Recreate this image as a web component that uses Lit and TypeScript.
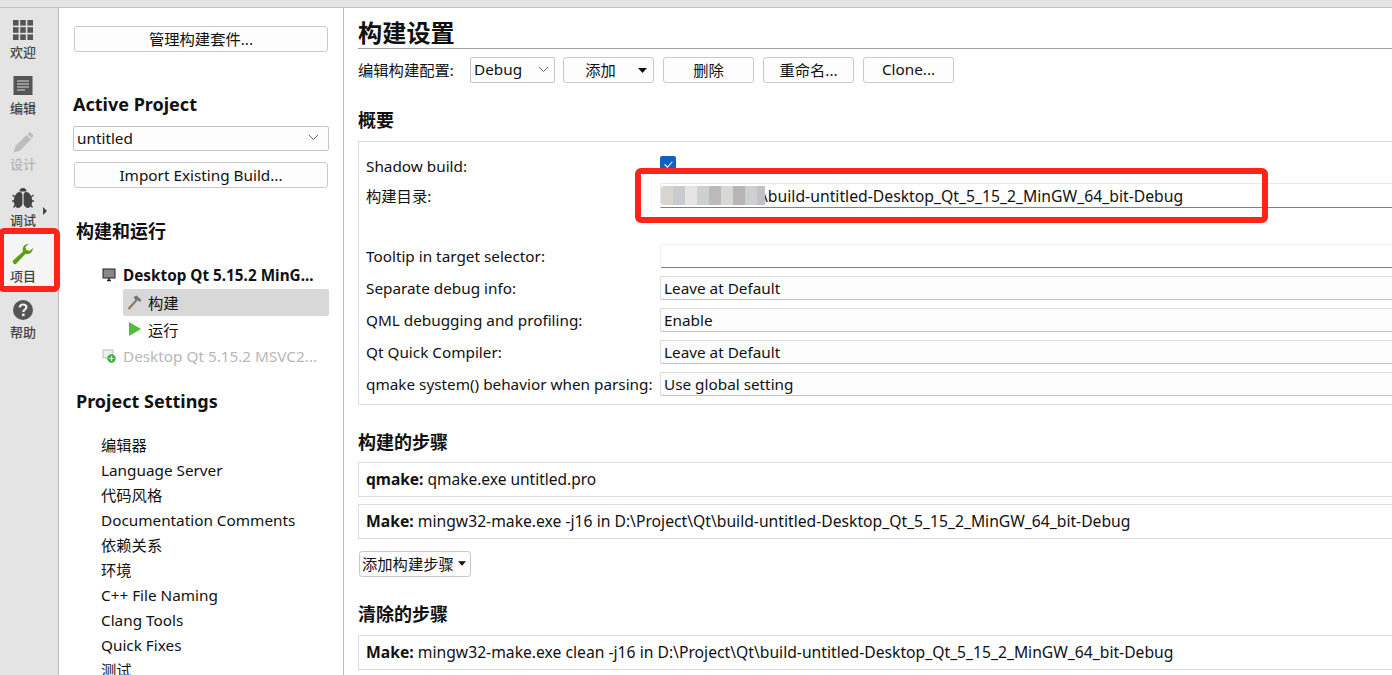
import { LitElement, html, css, svg } from "lit";
import { customElement } from "lit/decorators.js";

const caret = html`<svg class="chev" width="11" height="7" viewBox="0 0 11 7"><path d="M1 1l4.5 4.5L10 1" fill="none" stroke="#666" stroke-width="1"/></svg>`;
const tri = html`<svg class="tri" width="9" height="5" viewBox="0 0 9 5"><path d="M0 0h9L4.5 5z" fill="#111"/></svg>`;

const icons = {
  grid: svg`<g fill="#555">${[0, 1, 2].flatMap((r) => [0, 1, 2].map((c) => svg`<rect x="${1 + c * 7.2}" y="${1 + r * 7.2}" width="5.6" height="5.6"/>`))}</g>`,
  edit: svg`<rect x="1.500" y="1" width="19" height="19" fill="#555"/><path d="M5 6h12M5 9h12M5 12h12M5 15h8" stroke="#ddd" stroke-width="1"/>`,
  pencil: svg`<path d="M1.500 21.500l2-6.500L14.500 4l4.500 4.500L8 19.500z" fill="#bdbdbd"/><path d="M15.500 3L17 1.500c.6-.5 1-.5 1.500 0L21 4c.5.5.5 1 0 1.500L19.800 7.500z" fill="#bdbdbd"/>`,
  bug: svg`<ellipse cx="6.800" cy="13" rx="5" ry="8" transform="rotate(8 6.800 13)" fill="#444"/><ellipse cx="15.200" cy="13" rx="5" ry="8" transform="rotate(-8 15.200 13)" fill="#444"/><path d="M7.500 4.500a3.500 3.500 0 0 1 7 0z" fill="#444"/><path d="M11 5v16" stroke="#e4e4e4" stroke-width="1.200"/><path d="M3 10L.5 8M2.500 14H0M3.500 18l-2 2.500M19 10l2.500-2M19.500 14H22M18.500 18l2 2.500" stroke="#444" stroke-width="1.400"/>`,
  wrench: svg`<path d="M1.800 18.500L11.500 9.500C10.600 6.500 12 2.800 16.800 2.200L13.800 5.400 14.800 8.300 17.800 9.200 21 6.200C20.800 10.800 17 12.700 14 11.700L4.800 21.600C3.600 22.600 1 20 1.800 18.500z" fill="#5aa015"/>`,
  help: svg`<circle cx="11" cy="11" r="10" fill="#555"/><path d="M7.700 8.300C7.900 6.400 9.300 5.500 11.100 5.500 13 5.500 14.400 6.600 14.400 8.300 14.400 10.500 11.300 10.600 11.300 13" fill="none" stroke="#eee" stroke-width="2.200"/><rect x="10" y="14.500" width="2.600" height="2.600" fill="#eee"/>`,
};

@customElement("app-root")
export class AppRoot extends LitElement {
  static styles = css`
    :host { display: block; width: 1392px; height: 675px; overflow: hidden; position: relative; background: #fff; color: #111;
      font-family: "Noto Sans", "Noto Sans CJK SC", sans-serif; font-size: 15.3px; }
    .page { display: flex; flex-direction: column; height: 675px; }
    .topbar { height: 7px; flex: none; background: #e4e4e4; border-bottom: 1px solid #c0c0c0; }
    .body { display: flex; flex: 1; min-height: 0; }

    .rail { width: 58px; flex: none; background: #e4e4e4; border-right: 1px solid #bdbdbd; padding-top: 9px; display: flex; flex-direction: column; }
    .mode { position: relative; height: 56px; width: 51px; box-sizing: border-box; padding-right: 11px; margin-left: 3px; display: flex; flex-direction: column; align-items: center; color: #444; font-size: 13px; font-weight: 500; line-height: 17px; }
    .mode svg { margin-top: 2px; height: 22px; width: 22px; margin-bottom: 3px; flex: none; }
    .mode.dim { color: #b4b4b4; }
    .mode.on { background: #f5f5f5; margin-top: -7px; padding-top: 7px; height: 57px; margin-bottom: 6px; }
    .more { position: absolute; left: 40px; top: 22px; width: 0; height: 0; border-left: 4px solid #444; border-top: 4px solid transparent; border-bottom: 4px solid transparent; }

    .side { width: 285px; flex: none; box-sizing: border-box; border-right: 1px solid #bdbdbd; padding: 18px 14px 0 14px; overflow: hidden; }
    .btn { box-sizing: border-box; height: 26px; padding-bottom: 2px; border: 1px solid #c9c9c9; border-radius: 3px; background: #fdfdfd; display: flex; align-items: center; justify-content: center; position: relative; }
    .side .btn { margin: 0 1px; }
    .side .import { padding-bottom: 0; }
    .h-side { font-weight: 700; line-height: 26px; }
    .h1 { font-size: 18px; margin: 39px 0 9px 0; height: 26px; }
    .combo { box-sizing: border-box; height: 25px; border: 1px solid #c4c4c4; border-radius: 2px; background: #fdfdfd; display: flex; align-items: center; padding: 0 9px 2px 3px; justify-content: space-between; }
    .side .import { margin-top: 11px; }
    .h2 { font-size: 18px; margin: 30px 0 0 3px; }
    .target { display: flex; align-items: center; box-sizing: border-box; height: 27px; padding-bottom: 2px; white-space: nowrap; }
    .target svg { flex: none; }
    .kit { margin: 18px 0 0 29px; font-weight: 700; gap: 7px; }
    .sub { margin-left: 50px; width: 206px; padding-left: 4px; gap: 5px; border-radius: 2px; }
    .sub.on { background: #d8d8d8; }
    .kit2 { margin-left: 29px; color: #b8b8b8; gap: 7px; }
    .h3 { font-size: 18px; margin: 18px 0 19px 3px; }
    .links { margin: 0 0 0 28px; padding: 0; list-style: none; }
    .links li { height: 25px; line-height: 25px; white-space: nowrap; }

    .main { flex: 1; min-width: 0; padding: 8px 0 0 14px; overflow: hidden; }
    .title { font-size: 24.200px; font-weight: 700; line-height: 33px; height: 32px; border-bottom: 1px solid #a0a0a0; }
    .tools { display: flex; align-items: center; margin-top: 8px; height: 26px; }
    .tools .lbl { width: 112px; flex: none; padding-bottom: 2px; }
    .tools .combo { width: 85px; padding: 0 5px 2px 3px; margin-right: 8px; height: 26px; border-radius: 2px; flex: none; }
    .tools .btn { width: 91px; margin-right: 9px; flex: none; }
    .tools .add { padding-right: 16px; }
    .tri { position: absolute; right: 6px; top: 10px; }
    .h-main { font-size: 18px; font-weight: 700; line-height: 22px; height: 24px; }
    .sum { margin-top: 26px; }
    .box { margin-top: 8px; border: 1px solid #dcdcdc; border-right: none; padding: 12px 0 0 7px; height: 264px; box-sizing: border-box; display: grid; grid-template-columns: 294px 1fr; grid-template-rows: 22px 24px 20px repeat(5, 24px); row-gap: 8px; align-items: center; white-space: nowrap; }
    .shadow { padding-top: 2px; }
    .dirlabel { padding-bottom: 2px; }
    .check-row { align-self: start; padding-top: 2px; }
    .check { width: 16px; height: 16px; background: #0f62c4; border-radius: 2px; display: flex; align-items: center; justify-content: center; }
    .input { height: 25px; margin-top: -1px; box-sizing: border-box; border: 1px solid #e8e8e8; border-right: none; border-bottom: 1px solid #808080; border-radius: 2px 0 0 0; display: flex; align-items: center; background: #fff; font-size: 15.750px; }
    .blur { width: 104px; height: 19px; flex: none; filter: blur(.7px); border-radius: 3px 0 0 3px; background: linear-gradient(90deg, #d8d4d0 0 12px, #c6cbcf 12px 24px, #e6e4e4 24px 36px, #ccd0cf 36px 48px, #bdb9b8 48px 60px, #d6d8d6 60px 72px, #b9b4b6 72px 84px, #cdd0cf 84px 96px, #c4c0c4 96px 104px); }
    .dir { display: flex; align-items: center; margin-left: -3px; }
    .sel { height: 24px; box-sizing: border-box; border: 1px solid #dcdcdc; border-bottom-color: #c4c4c4; border-right: none; border-radius: 2px 0 0 2px; background: #fcfcfc; display: flex; align-items: center; padding-left: 3px; }
    .sel.empty { background: #fff; border-color: #efefef; border-bottom-color: #808080; }
    .steps { margin-top: 26px; }
    .step { margin-top: 7px; box-sizing: border-box; height: 35px; border: 1px solid #dcdcdc; border-right: none; padding: 0 0 2px 7px; display: flex; align-items: center; white-space: pre; font-size: 15.700px; }
    .step.short { font-size: 15.500px; }
    .after-clean { margin-top: 8px; }
    .addstep { margin: 12px 0 0 1px; width: 112px; height: 26px; justify-content: flex-start; padding-left: 2px; gap: 4px; }
    .addstep .tri { position: static; width: 8px; }
    .clean { margin-top: 26px; }

    .mark { position: absolute; box-sizing: border-box; border: 6px solid #ff2318; border-radius: 6px; pointer-events: none; }
    .mark.a { left: -2px; top: 228px; width: 62px; height: 64px; }
    .mark.b { left: 635px; top: 168px; width: 633px; height: 55px; }
  `;

  private mode(label: string, icon: unknown, vb: string, cls = "") {
    return html`<div class="mode ${cls}"><svg viewBox="${vb}">${icon}</svg><span>${label}</span>${label === "调试" ? html`<i class="more"></i>` : ""}</div>`;
  }

  render() {
    const links = ["编辑器", "Language Server", "代码风格", "Documentation Comments", "依赖关系", "环境", "C++ File Naming", "Clang Tools", "Quick Fixes", "测试"];
    return html`<div class="page">
      <div class="topbar"></div>
      <div class="body">
        <nav class="rail">
          ${this.mode("欢迎", icons.grid, "0 0 22 22")}
          ${this.mode("编辑", icons.edit, "0 0 22 22")}
          ${this.mode("设计", icons.pencil, "0 0 22 22", "dim")}
          ${this.mode("调试", icons.bug, "0 0 22 22")}
          ${this.mode("项目", icons.wrench, "1 1.500 21 21", "on")}
          ${this.mode("帮助", icons.help, "0 0 22 22")}
        </nav>
        <aside class="side">
          <div class="btn">管理构建套件...</div>
          <div class="h-side h1">Active Project</div>
          <div class="combo"><span>untitled</span>${caret}</div>
          <div class="btn import">Import Existing Build...</div>
          <div class="h-side h2">构建和运行</div>
          <div class="target kit">
            <svg width="14" height="14" viewBox="0 0 14 14"><rect x="1" y="1" width="12" height="9" fill="#888" stroke="#222"/><path d="M5 12.500h4M7 10v2" stroke="#222" stroke-width="1.500"/></svg>
            <span>Desktop Qt 5.15.2 MinG...</span>
          </div>
          <div class="target sub on">
            <svg width="16" height="16" viewBox="0 0 16 16"><path d="M1.500 15L10 5.500" stroke="#8a7560" stroke-width="2"/><path d="M6.500 3l3-1.500 5 4.500-1.500 2-3-2.500-1.500 .500z" fill="#667a8a"/></svg>
            <span>构建</span>
          </div>
          <div class="target sub">
            <svg width="16" height="16" viewBox="0 0 16 16"><path d="M2 1l12 7-12 7z" fill="#54bb3c"/></svg>
            <span>运行</span>
          </div>
          <div class="target kit2">
            <svg width="14" height="14" viewBox="0 0 14 14"><rect x="1" y="1" width="10" height="8" fill="#eee" stroke="#bbb"/><circle cx="9.500" cy="9.500" r="4.200" fill="#3fb13f"/><path d="M7.200 9.500h4.600M9.500 7.200v4.600" stroke="#fff" stroke-width="1.200"/></svg>
            <span>Desktop Qt 5.15.2 MSVC2...</span>
          </div>
          <div class="h-side h3">Project Settings</div>
          <ul class="links">${links.map((l) => html`<li>${l}</li>`)}</ul>
        </aside>
        <main class="main">
          <div class="title">构建设置</div>
          <div class="tools">
            <span class="lbl">编辑构建配置:</span>
            <div class="combo"><span>Debug</span>${caret}</div>
            <div class="btn add">添加${tri}</div>
            <div class="btn">删除</div>
            <div class="btn">重命名...</div>
            <div class="btn">Clone...</div>
          </div>
          <div class="h-main sum">概要</div>
          <section class="box">
            <span class="shadow">Shadow build:</span>
            <div class="check-row"><span class="check"><svg width="11" height="11" viewBox="0 0 10 10"><path d="M1.500 5l2.500 2.500 4.500-5" fill="none" stroke="#fff" stroke-width="1"/></svg></span></div>
            <span class="dirlabel">构建目录:</span>
            <div class="input"><span class="blur"></span><span class="dir">\\build-untitled-Desktop_Qt_5_15_2_MinGW_64_bit-Debug</span></div>
            <span></span><span></span>
            <span>Tooltip in target selector:</span><div class="sel empty"></div>
            <span>Separate debug info:</span><div class="sel">Leave at Default</div>
            <span>QML debugging and profiling:</span><div class="sel">Enable</div>
            <span>Qt Quick Compiler:</span><div class="sel">Leave at Default</div>
            <span>qmake system() behavior when parsing:</span><div class="sel">Use global setting</div>
          </section>
          <div class="h-main steps">构建的步骤</div>
          <div class="step short"><b>qmake:</b> qmake.exe untitled.pro</div>
          <div class="step"><b>Make:</b> mingw32-make.exe -j16 in D:\\Project\\Qt\\build-untitled-Desktop_Qt_5_15_2_MinGW_64_bit-Debug</div>
          <div class="btn addstep">添加构建步骤${tri}</div>
          <div class="h-main clean">清除的步骤</div>
          <div class="step after-clean"><b>Make:</b> mingw32-make.exe clean -j16 in D:\\Project\\Qt\\build-untitled-Desktop_Qt_5_15_2_MinGW_64_bit-Debug</div>
        </main>
      </div>
    </div>
    <div class="mark a"></div>
    <div class="mark b"></div>`;
  }
}
